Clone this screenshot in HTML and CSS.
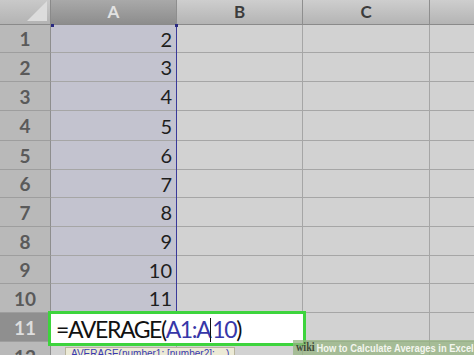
FILE: index.html
```html
<!DOCTYPE html>
<html>
<head>
<meta charset="utf-8">
<link rel="stylesheet" href="styles.css">
</head>
<body>
<div class="sheet">
  <div class="grid">
    <div class="corner"><span class="tri"></span></div>
    <div class="colhead sel">A</div>
    <div class="colhead">B</div>
    <div class="colhead">C</div>
    <div class="colhead"></div>

    <div class="rowhead">1</div><div class="cell a">2</div><div class="cell"></div><div class="cell"></div><div class="cell"></div>
    <div class="rowhead">2</div><div class="cell a">3</div><div class="cell"></div><div class="cell"></div><div class="cell"></div>
    <div class="rowhead">3</div><div class="cell a">4</div><div class="cell"></div><div class="cell"></div><div class="cell"></div>
    <div class="rowhead">4</div><div class="cell a">5</div><div class="cell"></div><div class="cell"></div><div class="cell"></div>
    <div class="rowhead">5</div><div class="cell a">6</div><div class="cell"></div><div class="cell"></div><div class="cell"></div>
    <div class="rowhead">6</div><div class="cell a">7</div><div class="cell"></div><div class="cell"></div><div class="cell"></div>
    <div class="rowhead">7</div><div class="cell a">8</div><div class="cell"></div><div class="cell"></div><div class="cell"></div>
    <div class="rowhead">8</div><div class="cell a">9</div><div class="cell"></div><div class="cell"></div><div class="cell"></div>
    <div class="rowhead">9</div><div class="cell a">10</div><div class="cell"></div><div class="cell"></div><div class="cell"></div>
    <div class="rowhead">10</div><div class="cell a">11</div><div class="cell"></div><div class="cell"></div><div class="cell"></div>
    <div class="rowhead active">11</div><div class="cell"></div><div class="cell"></div><div class="cell"></div><div class="cell"></div>
    <div class="rowhead">12</div><div class="cell"></div><div class="cell"></div><div class="cell"></div><div class="cell"></div>
  </div>

  <div class="selline"></div>
  <div class="handle h1"></div>
  <div class="handle h2"></div>

  <div class="editor">=AVERAGE(<span class="ref">A1:A<span class="caret"></span>10</span>)</div>
  <div class="tip">AVERAGE(number1; [number2]; ...)</div>
  <div class="wm"><span class="wmtext"><span class="wiki">wiki</span><span class="how">How to Calculate Averages in Excel</span></span></div>
</div>
</body>
</html>
```

FILE: styles.css
```css
html, body { margin: 0; padding: 0; }
body { width: 474px; height: 355px; overflow: hidden; background: #d2d2d2; }
.sheet { position: relative; width: 474px; height: 355px; overflow: hidden; font-family: Lato, "Open Sans", sans-serif; }
.grid {
  display: grid;
  grid-template-columns: 51px 126px 126px 127px 60px;
  grid-template-rows: 25px 28px 29px 29px 30px 29px 28px 29px 29px 28px 29px 29px 29px;
}
.grid > div { box-sizing: border-box; border-right: 1px solid #a6a6a6; border-bottom: 1px solid #a6a6a6; }
.corner { position: relative; background: linear-gradient(#c9c9c9, #b3b3b3); border-right-color: #8a8a8a !important; border-bottom-color: #8a8a8a !important; }
.tri { position: absolute; right: 3px; bottom: 3px; width: 0; height: 0; border-left: 20px solid transparent; border-bottom: 20px solid #dcdcdc; }
.colhead {
  background: linear-gradient(#cecece, #b4b4b4);
  border-right-color: #8e8e8e !important;
  border-bottom-color: #8a8a8a !important;
  display: flex; align-items: center; justify-content: center;
  font-weight: 700; font-size: 17px; color: #3c3c3c; padding-bottom: 2px;
}
.colhead.sel { background: linear-gradient(#a9a9a9, #8d8d8d); color: #e2e2e2; }
.rowhead {
  background: #b9b9b9;
  border-right-color: #8e8e8e !important;
  border-bottom-color: #9e9e9e !important;
  display: flex; align-items: center; justify-content: center;
  font-weight: 700; font-size: 19px; color: #5a5a5a;
}
.rowhead.active { background: #8f8f8f; color: #dedede; }
.cell { background: #d2d2d2; }
.cell.a {
  background: #c3c3cf;
  display: flex; align-items: center; justify-content: flex-end;
  padding-right: 4px; font-size: 20px; color: #1e1e1e;
}
.selline { position: absolute; left: 176px; top: 25px; width: 1px; height: 287px; background: #3a3a9a; }
.handle { position: absolute; width: 3px; height: 3px; background: #2a2a80; top: 24px; }
.h1 { left: 51px; }
.h2 { left: 175px; }
.editor {
  position: absolute; left: 48px; top: 311px; width: 258px; height: 35px;
  box-sizing: border-box; border: 3px solid #3dd43d; background: #ffffff;
  font-size: 23px; letter-spacing: -1.4px; color: #111; line-height: 30px; padding-left: 5px; white-space: nowrap;
}
.ref { color: #3737a8; }
.caret { display: inline-block; width: 1px; height: 24px; background: #111; vertical-align: -4px; margin: 0 1px 0 0; }
.tip {
  position: absolute; left: 65px; top: 347px; height: 14px; padding: 0 5px;
  background: #ecead6; border: 1px solid #b8b49c;
  font-family: "Liberation Sans", sans-serif; font-size: 10px; line-height: 12px; color: #3a3ab0; white-space: nowrap;
}
.wm {
  position: absolute; left: 293px; top: 340px; right: 0; height: 15px;
  background: rgba(150, 180, 130, 0.75);
  display: flex; align-items: center; padding-left: 3px; overflow: hidden;
}
.wmtext {
  display: inline-flex; align-items: center; gap: 2px;
  font-family: "Liberation Sans", sans-serif; font-weight: 700; font-size: 11px; white-space: nowrap;
  transform: scaleX(0.85); transform-origin: left center;
}
.wiki { font-family: "Liberation Serif", serif; color: #3e4a36; font-size: 12px; }
.how { color: #f4f6ef; }
```
